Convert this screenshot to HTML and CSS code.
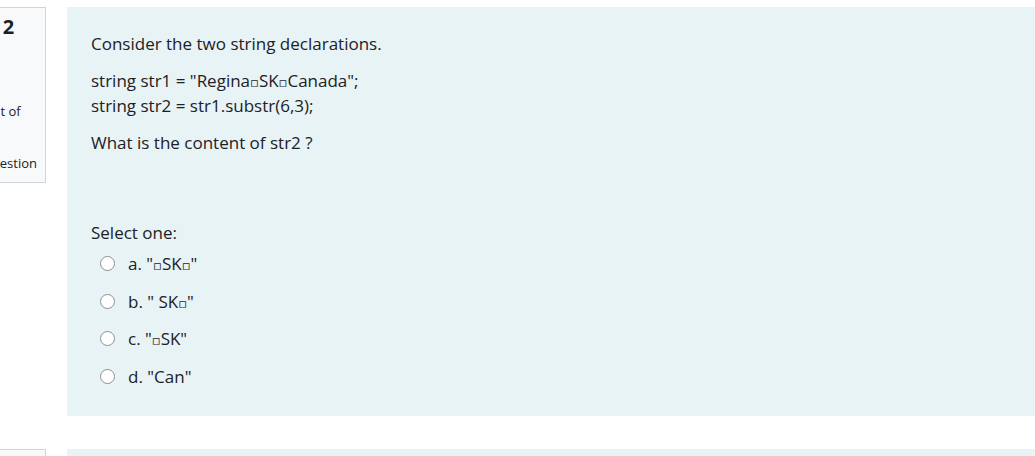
FILE: index.html
```html
<!DOCTYPE html>
<html lang="en">
<head>
<meta charset="utf-8">
<title>Quiz</title>
<link rel="stylesheet" href="styles.css">
</head>
<body>
<div class="page">
  <div class="que">
    <div class="info">
      <h3 class="no">Question <span class="qno">2</span></h3>
      <div class="state">Not yet answered</div>
      <div class="grade">Marked out of 1.00</div>
      <div class="flag"><span class="flag-icon"></span>Flag question</div>
    </div>
    <div class="content">
      <div class="qtext">
        <p>Consider the two string declarations.</p>
        <p>string str1 = "Regina<span class="tofu">▫</span>SK<span class="tofu">▫</span>Canada";<br>string str2 = str1.substr(6,3);</p>
        <p>What is the content of str2 ?</p>
      </div>
      <div class="ablock">
        <div class="prompt">Select one:</div>
        <div class="answer">
          <label class="opt"><input type="radio" name="q2"><span>a. "<span class="tofu">▫</span>SK<span class="tofu">▫</span>"</span></label>
          <label class="opt"><input type="radio" name="q2"><span>b. " SK<span class="tofu">▫</span>"</span></label>
          <label class="opt"><input type="radio" name="q2"><span>c. "<span class="tofu">▫</span>SK"</span></label>
          <label class="opt"><input type="radio" name="q2"><span>d. "Can"</span></label>
        </div>
      </div>
    </div>
  </div>
  <div class="que">
    <div class="info">
      <h3 class="no">Question <span class="qno">3</span></h3>
      <div class="state">Not yet answered</div>
      <div class="grade">Marked out of 1.00</div>
      <div class="flag"><span class="flag-icon"></span>Flag question</div>
    </div>
    <div class="content">
      <div class="qtext"><p>&nbsp;</p></div>
    </div>
  </div>
</div>
</body>
</html>
```
FILE: styles.css
```css
html, body {
  margin: 0;
  padding: 0;
  background: #ffffff;
  overflow: hidden;
}
body {
  font-family: "Open Sans", "Noto Sans", sans-serif;
  color: #1d2125;
  font-size: 17px;
}
.page {
  padding-top: 7px;
  margin-left: -67px;
}
.que {
  display: flex;
  align-items: flex-start;
  gap: 21px;
  margin-bottom: 33px;
}
.info {
  flex: 0 0 auto;
  box-sizing: border-box;
  width: 113px;
  height: 176px;
  padding: 8px 8px 8px 1px;
  background: #f8f9fa;
  border: 1px solid #cfd4d9;
  font-size: 13px;
  line-height: 18px;
}
.no {
  margin: 0 0 22px;
  font-size: 15px;
  font-weight: normal;
  line-height: 22px;
  white-space: nowrap;
}
.qno {
  font-size: 20px;
  font-weight: bold;
}
.state {
  width: 60px;
  margin-bottom: 5px;
}
.grade {
  width: 90px;
  margin-bottom: 16px;
}
.flag {
  display: flex;
  align-items: center;
  white-space: nowrap;
}
.flag-icon {
  display: inline-block;
  width: 12px;
  height: 12px;
  margin-right: 10px;
  border-left: 2px solid #6a737b;
  box-sizing: border-box;
}
.content {
  flex: 1 1 auto;
  box-sizing: border-box;
  height: 409px;
  padding: 24px 24px 19px;
  background: #e7f3f5;
  line-height: 25px;
}
.qtext p {
  margin: 0 0 12px;
}
.ablock {
  margin-top: 65px;
}
.tofu {
  font-family: "DejaVu Sans", sans-serif;
  font-size: 13px;
  line-height: 0;
}
.answer {
  display: flex;
  flex-direction: column;
}
.opt {
  display: flex;
  align-items: center;
  padding: 6.3px 0;
  line-height: 25px;
}
.opt input {
  appearance: none;
  -webkit-appearance: none;
  box-sizing: border-box;
  width: 15px;
  height: 15px;
  margin: 0 13px 0 9px;
  border: 1px solid #8c8f94;
  border-radius: 50%;
  background: #ffffff;
}
```
